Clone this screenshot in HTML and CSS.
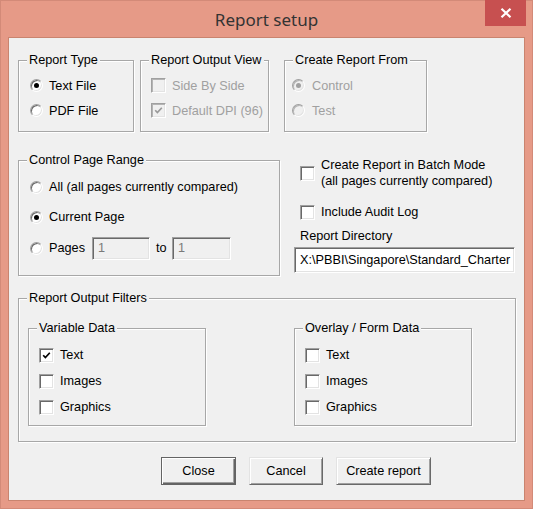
FILE: index.html
```html
<!DOCTYPE html>
<html>
<head>
<meta charset="utf-8">
<title>Report setup</title>
<link rel="stylesheet" href="styles.css">
</head>
<body>
<div class="window">
  <div class="titlebar">
    <span class="title">Report setup</span>
    <button class="close-x" aria-label="Close"><svg width="12" height="10" viewBox="0 0 12 10"><path d="M1.5 0.8 L10.5 9.2 M10.5 0.8 L1.5 9.2" stroke="#fff" stroke-width="2.2"/></svg></button>
  </div>
  <div class="client">
    <div class="row row1">
      <div class="group g-type">
        <div class="gtitle">Report Type</div>
        <div class="opts pad11">
          <div class="opt h25"><span class="radio on"></span><span class="lbl">Text File</span></div>
          <div class="opt h25"><span class="radio"></span><span class="lbl">PDF File</span></div>
        </div>
      </div>
      <div class="group g-view">
        <div class="gtitle">Report Output View</div>
        <div class="opts pad10">
          <div class="opt h25 disabled"><span class="chk"></span><span class="lbl">Side By Side</span></div>
          <div class="opt h25 disabled"><span class="chk"><svg width="9" height="9" viewBox="0 0 9 9"><path d="M1.2 4.2 L3.4 6.6 L7.8 1.8" fill="none" stroke="#9a9a9a" stroke-width="1.7"/></svg></span><span class="lbl">Default DPI (96)</span></div>
        </div>
      </div>
      <div class="group g-from">
        <div class="gtitle">Create Report From</div>
        <div class="opts pad7">
          <div class="opt h25 disabled"><span class="radio on"></span><span class="lbl">Control</span></div>
          <div class="opt h25 disabled"><span class="radio"></span><span class="lbl">Test</span></div>
        </div>
      </div>
    </div>

    <div class="row row2">
      <div class="group g-range">
        <div class="gtitle">Control Page Range</div>
        <div class="opts pad11 top4">
          <div class="opt h30"><span class="radio"></span><span class="lbl">All (all pages currently compared)</span></div>
          <div class="opt h30"><span class="radio on"></span><span class="lbl">Current Page</span></div>
          <div class="opt h32"><span class="radio"></span><span class="lbl pages-lbl">Pages</span><input class="field small" type="text" value="1" disabled><span class="to">to</span><input class="field small2" type="text" value="1" disabled></div>
        </div>
      </div>
      <div class="side">
        <div class="opt batch"><span class="chk"></span><span class="lbl two">Create Report in Batch Mode<br>(all pages currently compared)</span></div>
        <div class="opt audit"><span class="chk"></span><span class="lbl">Include Audit Log</span></div>
        <div class="dir-lbl">Report Directory</div>
        <input class="field dir" type="text" value="X:\PBBI\Singapore\Standard_Charter">
      </div>
    </div>

    <div class="group filters">
      <div class="gtitle">Report Output Filters</div>
      <div class="subrow">
        <div class="group sub">
          <div class="gtitle">Variable Data</div>
          <div class="opts pad10 top6">
            <div class="opt h26"><span class="chk"><svg width="9" height="9" viewBox="0 0 9 9"><path d="M1.2 4.2 L3.4 6.6 L7.8 1.8" fill="none" stroke="#000" stroke-width="1.7"/></svg></span><span class="lbl">Text</span></div>
            <div class="opt h26"><span class="chk"></span><span class="lbl">Images</span></div>
            <div class="opt h26"><span class="chk"></span><span class="lbl">Graphics</span></div>
          </div>
        </div>
        <div class="group sub sub2">
          <div class="gtitle">Overlay / Form Data</div>
          <div class="opts pad10 top6">
            <div class="opt h26"><span class="chk"></span><span class="lbl">Text</span></div>
            <div class="opt h26"><span class="chk"></span><span class="lbl">Images</span></div>
            <div class="opt h26"><span class="chk"></span><span class="lbl">Graphics</span></div>
          </div>
        </div>
      </div>
    </div>

    <div class="buttons">
      <button class="btn default b-close">Close</button>
      <button class="btn b-cancel">Cancel</button>
      <button class="btn b-create">Create report</button>
    </div>
  </div>
</div>
</body>
</html>
```

FILE: styles.css
```css
* { box-sizing: border-box; }
html, body { margin: 0; padding: 0; background: #e69a87; }
body {
  font-family: "Liberation Sans", Arial, sans-serif;
  font-size: 12.7px;
  color: #000;
}
.window {
  width: 533px;
  height: 509px;
  background: #e69a87;
  border: 1px solid #d38a78;
  position: relative;
  display: flex;
  flex-direction: column;
}
.titlebar {
  height: 36px;
  display: flex;
  align-items: center;
  justify-content: center;
}
.title {
  font-family: "Noto Sans", "Open Sans", sans-serif;
  font-size: 17px;
  color: #333;
  padding-top: 1px;
}
.close-x {
  position: absolute;
  top: -1px;
  right: 6px;
  width: 41px;
  height: 26px;
  background: #c75050;
  border: 0;
  padding: 0;
  display: flex;
  align-items: center;
  justify-content: center;
}
.client {
  margin: 0 7px;
  height: 464px;
  background: #f0f0f0;
  border: 1px solid #c9846f;
  padding: 22px 8px 0 9px;
}
.row { display: flex; align-items: flex-start; }

.group {
  border: 1px solid #a7a7a7;
  box-shadow: inset 1px 1px 0 #fff, 1px 1px 0 #fff;
}
.gtitle {
  display: table;
  margin: -8px 0 0 8px;
  padding: 0 2px;
  line-height: 15px;
  background: #f0f0f0;
  white-space: nowrap;
}
.g-type { width: 116px; height: 72px; }
.g-view { width: 129px; height: 72px; margin-left: 6px; }
.g-from { width: 143px; height: 72px; margin-left: 15px; }

.opts { padding-top: 5px; }
.opts.top4 { padding-top: 4px; }
.opts.top6 { padding-top: 6px; }
.pad11 { padding-left: 11px; }
.pad10 { padding-left: 10px; }
.pad7 { padding-left: 7px; }

.opt { display: flex; align-items: center; white-space: nowrap; }
.h25 { height: 25px; }
.h26 { height: 26px; }
.h30 { height: 30px; }
.h32 { height: 32px; }

.radio {
  width: 13px;
  height: 13px;
  flex: none;
  border-radius: 50%;
  border: 1px solid;
  border-color: #a0a0a0 #fff #fff #a0a0a0;
  box-shadow: inset 1px 1px 0 #696969, inset -1px -1px 0 #e3e3e3;
  background: #fff;
  display: flex;
  align-items: center;
  justify-content: center;
  margin-right: 6px;
}
.radio.on::after {
  content: "";
  width: 5px;
  height: 5px;
  border-radius: 50%;
  background: #000;
}
.g-from .radio { margin-right: 7px; }

.chk {
  width: 15px;
  height: 15px;
  flex: none;
  border: 1px solid;
  border-color: #a0a0a0 #fff #fff #a0a0a0;
  box-shadow: inset 1px 1px 0 #696969, inset -1px -1px 0 #e3e3e3;
  background: #fff;
  display: flex;
  align-items: center;
  justify-content: center;
  margin-right: 6px;
}
.chk svg { display: block; }

.disabled .lbl { color: #a0a0a0; }
.disabled .radio, .disabled .chk {
  background: #f0f0f0;
  box-shadow: inset 1px 1px 0 #b4b4b4, inset -1px -1px 0 #e3e3e3;
}
.disabled .radio.on::after { background: #a0a0a0; }

.row2 { margin-top: 28px; }
.g-range { width: 262px; height: 116px; }
.pages-lbl { width: 43px; }
.field {
  font: inherit;
  border: 1px solid;
  border-color: #a0a0a0 #fff #fff #a0a0a0;
  box-shadow: inset 1px 1px 0 #696969, inset -1px -1px 0 #e3e3e3;
  outline: none;
  margin: 0;
}
.small, .small2 {
  height: 23px;
  background: #f0f0f0;
  color: #7a7a7a;
  padding: 0 0 0 5px;
}
.small { width: 58px; }
.small2 { width: 59px; }
.to { width: 16px; margin-left: 6px; }

.side {
  width: 221px;
  margin-left: 14px;
  margin-top: -3px;
}
.batch { padding-left: 6px; }
.lbl.two { line-height: 16px; }
.audit { padding-left: 6px; margin-top: 15px; height: 16px; }
.dir-lbl { padding-left: 6px; margin-top: 8px; line-height: 16px; }
.dir {
  display: block;
  width: 221px;
  height: 26px;
  margin-top: 3px;
  background: #fff;
  color: #000;
  padding: 0 0 0 5px;
}

.filters {
  width: 498px;
  height: 144px;
  margin-top: 22px;
}
.subrow {
  display: flex;
  margin-top: 22px;
  padding-left: 9px;
}
.sub { width: 178px; height: 98px; }
.sub2 { margin-left: 88px; }

.buttons {
  display: flex;
  margin-top: 15px;
  padding-left: 143px;
}
.btn {
  font: inherit;
  color: #000;
  height: 28px;
  background: #f0f0f0;
  border: 1px solid;
  border-color: #e3e3e3 #696969 #696969 #e3e3e3;
  box-shadow: inset 1px 1px 0 #fff, inset -1px -1px 0 #a0a0a0;
  padding: 0;
  text-align: center;
}
.btn.default {
  border: 1px solid #646464;
  box-shadow: inset 1px 1px 0 #fff, inset -1px -1px 0 #646464, inset -2px -2px 0 #a0a0a0;
}
.b-close { width: 75px; }
.b-cancel { width: 74px; margin-left: 13px; }
.b-create { width: 95px; margin-left: 13px; }
```
